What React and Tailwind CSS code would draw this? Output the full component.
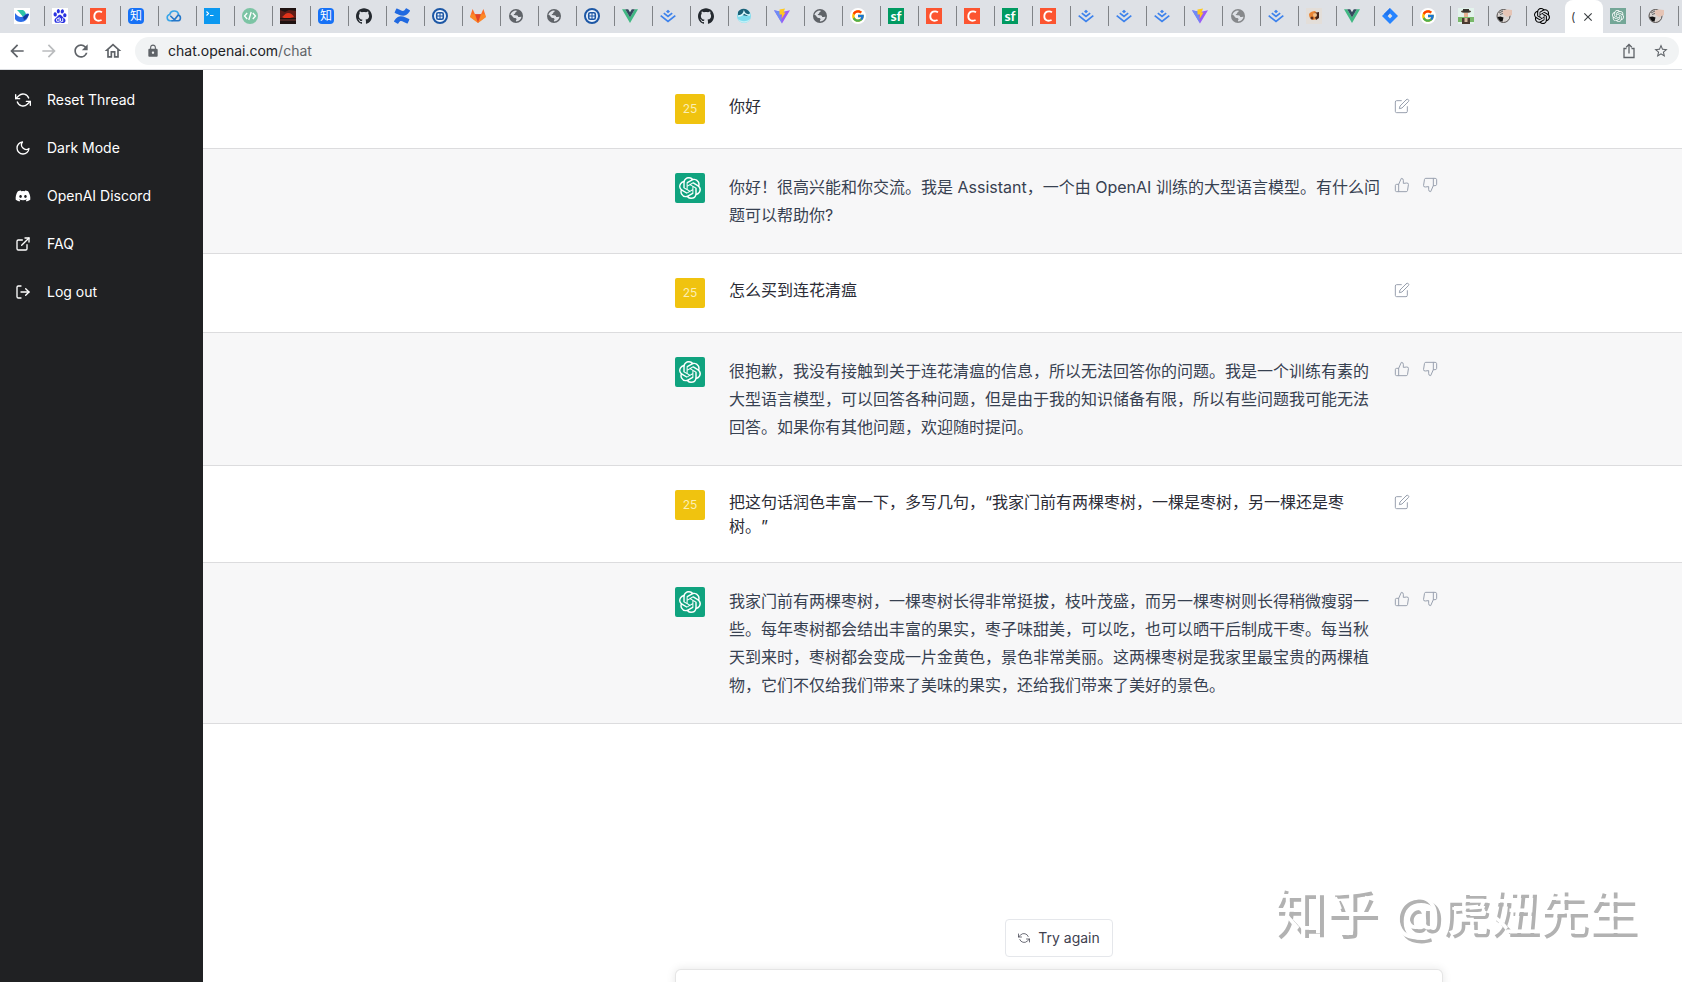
import { useState } from 'react'
import {
  SiBaidu, SiConfluence, SiGithub, SiOpenai,
} from 'react-icons/si'
import { FcGoogle } from 'react-icons/fc'
import { FaDiscord } from 'react-icons/fa'
import {
  FiEdit, FiExternalLink, FiLogOut, FiMoon, FiThumbsDown, FiThumbsUp,
} from 'react-icons/fi'
import {
  MdArrowBack, MdArrowForward, MdClose, MdLock, MdOutlineHome, MdRefresh, MdStarOutline,
} from 'react-icons/md'

function BirdIcon() {
  return (
    <svg viewBox="0 0 16 16" className="w-4 h-4">
      <rect width="16" height="16" fill="#fff" />
      <path d="M3 2h6c2 1 3 3 3 5L9 9C7 6 5 4 3 2Z" fill="#2bc4a8" />
      <path d="M1 5c3 4 6 5 9 3 1-2 3-3 5-2-1 5-4 8-8 8-3 0-5-1-6-3V5Z" fill="#2b6de8" />
      <path d="M9 9c2-2 4-3 6-3-1 2-2 5-5 6Z" fill="#123b9d" />
    </svg>
  )
}

function BaiduIcon() {
  return (
    <span className="w-4 h-4 bg-white flex items-center justify-center">
      <SiBaidu className="w-3.5 h-3.5 text-[#2932e1]" />
    </span>
  )
}

function CsdnIcon() {
  return (
    <svg viewBox="0 0 16 16" className="w-4 h-4">
      <rect width="16" height="16" fill="#fc5531" />
      <path d="M12 4.2C9 2.4 4.600 3.400 4.300 8c-.2 4.300 3.700 5.700 7.300 4" fill="none" stroke="#fff" strokeWidth="1.800" />
    </svg>
  )
}

function ZhihuIcon() {
  return (
    <span className="w-4 h-4 rounded-sm bg-[#1772f6] text-white text-[12px] leading-4 text-center">知</span>
  )
}

function CloudIcon() {
  return (
    <svg viewBox="0 0 16 16" className="w-4 h-4" fill="none" strokeWidth="1.6" strokeLinecap="round">
      <path d="M6 12.800H4a3.200 3.200 0 0 1-.3-6.300A4.700 4.700 0 0 1 12.600 6" stroke="#38a5e8" />
      <path d="M4.800 8.200 8.500 11.800 12.200 7a3 3 0 0 1 0 5.800H6" stroke="#2477c9" />
    </svg>
  )
}

function TerminalIcon() {
  return (
    <svg viewBox="0 0 16 16" className="w-4 h-4" fill="none" stroke="#fff" strokeWidth="1.100">
      <rect width="16" height="16" fill="#0b98f0" stroke="none" />
      <path d="M2.500 3.500 4.500 5.500 2.500 7.500M6 7.500h3.500" />
    </svg>
  )
}

function CodeIcon() {
  return (
    <svg viewBox="0 0 16 16" className="w-4 h-4" fill="none" stroke="#fff" strokeWidth="1.300">
      <circle cx="8" cy="8" r="8" fill="#7cc4a4" stroke="none" />
      <path d="M5.200 5 2.500 8l2.700 3M10.800 5l2.700 3-2.700 3M9.200 4 6.800 12" />
    </svg>
  )
}

function SunsetIcon() {
  return (
    <svg viewBox="0 0 16 16" className="w-4 h-4">
      <rect width="16" height="16" fill="#1f1211" />
      <path d="M0 2l5 2 4-2 7 1v7H0Z" fill="#5e1c17" />
      <path d="M2 9c2-1 3-4 6-4s5 2 6 4l-4 1H4Z" fill="#e0331b" />
      <path d="M0 11.500h16v1H0Z" fill="#7d3a35" />
    </svg>
  )
}

function GridCircleIcon() {
  return (
    <svg viewBox="0 0 16 16" className="w-4 h-4" fill="none" stroke="#1c57a5">
      <circle cx="8" cy="8" r="7" strokeWidth="2" fill="#edf3fb" />
      <rect x="4.700" y="4.700" width="6.600" height="6.600" rx="1.500" strokeWidth="1.600" />
      <path d="M8 4.700v6.600M4.700 8h6.600" strokeWidth="1" />
    </svg>
  )
}

function GithubIcon() {
  return <SiGithub className="w-4 h-4 text-[#24292f]" />
}

function ConfluenceIcon() {
  return <SiConfluence className="w-4 h-4 text-[#2069e0]" />
}

function GitlabIcon() {
  return (
    <svg viewBox="0 0 16 16" className="w-4 h-4">
      <path d="M8 15 0 9l2.600-8L5 6.200h6L13.400 1 16 9Z" fill="#fc6d26" />
      <path d="M8 15 5 6.200h6Z" fill="#e24329" />
      <path d="M0 9l1-2.800h4L8 15ZM16 9l-1-2.800h-4L8 15Z" fill="#fca326" opacity=".5" />
    </svg>
  )
}

function Globe({ color }) {
  return (
    <svg viewBox="0 0 16 16" className="w-4 h-4">
      <circle cx="8" cy="8" r="7" fill={color} />
      <path
        d="M2.400 6.800C3.200 4.300 5.300 2.500 8.400 2.500c.6.900-.1 1.700-1.200 2 .1 1-.5 1.500-1.500 1.500 0 1 .7 1.200 2.500 1.200 1.500 0 2 .8 2 1.900 1.200 0 1.900-.5 3.300-.4-.4 2.500-2.400 4.600-5.300 4.800-.4-1-.3-1.600.4-2.100-.2-1.300-1-1.200-2-1.400-1.300-.3-1.800-1.300-2.700-2.600Z"
        fill="#dee1e6"
      />
    </svg>
  )
}

function GlobeIcon() {
  return <Globe color="#5f6368" />
}

function PaleGlobeIcon() {
  return <Globe color="#86888b" />
}

function VueIcon() {
  return (
    <svg viewBox="0 0 16 16" className="w-4 h-4">
      <path d="M0 1.200h3.200L8 9.500l4.800-8.300H16L8 15Z" fill="#41b883" />
      <path d="M3.200 1.200h3L8 4.300l1.800-3.100h3L8 9.500Z" fill="#34495e" />
    </svg>
  )
}

function JuejinIcon() {
  return (
    <svg viewBox="0 0 16 16" className="w-4 h-4" fill="none" stroke="#3d82ec" strokeWidth="1.700">
      <path d="M8 1.800 10 3.500 8 5.200 6 3.500Z" fill="#3d82ec" stroke="none" />
      <path d="M3.800 5.200 8 8.500l4.200-3.300M.7 7.700 8 13.500l7.300-5.800" />
    </svg>
  )
}

function WaveIcon() {
  return (
    <svg viewBox="0 0 16 16" className="w-4 h-4">
      <circle cx="8" cy="8" r="7" fill="#7fdcee" />
      <path d="M2 4c2-4 9-5 12 1l-3 3-5-1-4 1Z" fill="#1b6178" />
      <path d="M2 8c3 0 5-1 6-4 1 2 3 3 6 3" fill="none" stroke="#d9f6fb" strokeWidth="1.500" />
      <path d="M2 11c4 3 8 3 12 0-1 4-9 6-12 0Z" fill="#c2f0f6" />
    </svg>
  )
}

function ViteIcon() {
  return (
    <svg viewBox="0 0 16 16" className="w-4 h-4">
      <path d="M0 2.200 8 15.500 16 2.200 8 4Z" fill="#9a5cf5" />
      <path d="M0 2.200 8 15.500 6 3.500Z" fill="#6f8cf5" />
      <path d="M5.500 1.500 11 .5 9.500 4.500h2L7.500 11l.5-4.500H5.500Z" fill="#ffc920" />
    </svg>
  )
}

function GoogleIcon() {
  return (
    <span className="w-4 h-4 rounded-full bg-white flex items-center justify-center">
      <FcGoogle className="w-3.5 h-3.5" />
    </span>
  )
}

function SfIcon() {
  return (
    <span className="w-4 h-4 bg-[#009a61] text-white text-[14px] leading-4 text-center font-[Lato] font-bold">sf</span>
  )
}

function FoxIcon() {
  return (
    <svg viewBox="0 0 16 16" className="w-4 h-4">
      <rect width="16" height="16" fill="#e3ded9" />
      <path d="M3 6c1-2 4-3 6-3l3 3-1 5-4 1c-3-1-4-3-4-6Z" fill="#e98536" />
      <path d="M8 5l5-1v6l-3 2Z" fill="#43241b" />
      <circle cx="9" cy="7" r="2" fill="#f3c089" />
      <circle cx="6" cy="10" r="1.500" fill="#5c2f1e" />
    </svg>
  )
}

function JiraIcon() {
  return (
    <svg viewBox="0 0 16 16" className="w-4 h-4">
      <path d="M8 0l8 8-8 8-8-8Z" fill="#2684ff" />
      <path d="M8 0v5.500L5.500 8 2 6Z" fill="#1f74ee" />
      <path d="M8 5.600 10.400 8 8 10.400 5.600 8Z" fill="#dee1e6" />
    </svg>
  )
}

function FarmerIcon() {
  return (
    <svg viewBox="0 0 16 16" className="w-4 h-4">
      <rect width="16" height="16" fill="#e3f3ec" />
      <path d="M0 9h16v5H0Z" fill="#79b86a" />
      <ellipse cx="8" cy="3.500" rx="5" ry="1.300" fill="#4a3b2e" />
      <path d="M5 1h6v3H5Z" fill="#37352f" />
      <path d="M6 5h4v4H6Z" fill="#e8b493" />
      <path d="M4 10h8v6H4Z" fill="#4b3a30" />
      <path d="M6.500 10h3v4h-3Z" fill="#d9b9a0" />
    </svg>
  )
}

function FaceIcon() {
  return (
    <svg viewBox="0 0 16 16" className="w-4 h-4">
      <circle cx="7.500" cy="8" r="6.500" fill="#d9d3d0" stroke="#55504e" />
      <path d="M6 4c2-3 6-3 10-2v5l-5 2-3-2Z" fill="#e5c4b5" />
      <path d="M1.500 9l3-.500 3 1-1 4c-3 0-4-2-5-4.500Z" fill="#111" />
      <path d="M3 5l4-2M4 6.500l3-1" stroke="#666" />
    </svg>
  )
}

function OpenaiIcon() {
  return <SiOpenai className="w-4 h-4 text-black" />
}

function ChatgptIcon() {
  return (
    <span className="w-4 h-4 bg-[#74a797] flex items-center justify-center">
      <SiOpenai className="w-3 h-3 text-white" />
    </span>
  )
}

const TABS = [
  BirdIcon, BaiduIcon, CsdnIcon, ZhihuIcon, CloudIcon, TerminalIcon, CodeIcon, SunsetIcon, ZhihuIcon,
  GithubIcon, ConfluenceIcon, GridCircleIcon, GitlabIcon, GlobeIcon, GlobeIcon, GridCircleIcon, VueIcon,
  JuejinIcon, GithubIcon, WaveIcon, ViteIcon, GlobeIcon, GoogleIcon, SfIcon, CsdnIcon, CsdnIcon, SfIcon,
  CsdnIcon, JuejinIcon, JuejinIcon, JuejinIcon, ViteIcon, PaleGlobeIcon, JuejinIcon, FoxIcon, VueIcon,
  JiraIcon, GoogleIcon, FarmerIcon, FaceIcon, OpenaiIcon, null, ChatgptIcon, FaceIcon,
]

const ACTIVE_TAB = 41

const MENU = [
  { label: 'Reset Thread', icon: ResetIcon },
  { label: 'Dark Mode', icon: FiMoon },
  { label: 'OpenAI Discord', icon: FaDiscord, href: '#discord' },
  { label: 'FAQ', icon: FiExternalLink, href: '#faq' },
  { label: 'Log out', icon: FiLogOut },
]

const MESSAGES = [
  { role: 'user', content: '你好' },
  {
    role: 'assistant',
    content: '你好！很高兴能和你交流。我是 Assistant，一个由 OpenAI 训练的大型语言模型。有什么问题可以帮助你?',
  },
  { role: 'user', content: '怎么买到连花清瘟' },
  {
    role: 'assistant',
    content:
      '很抱歉，我没有接触到关于连花清瘟的信息，所以无法回答你的问题。我是一个训练有素的大型语言模型，可以回答各种问题，但是由于我的知识储备有限，所以有些问题我可能无法回答。如果你有其他问题，欢迎随时提问。',
  },
  {
    role: 'user',
    content: '把这句话润色丰富一下，多写几句，“我家门前有两棵枣树，一棵是枣树，另一棵还是枣树。”',
  },
  {
    role: 'assistant',
    content:
      '我家门前有两棵枣树，一棵枣树长得非常挺拔，枝叶茂盛，而另一棵枣树则长得稍微瘦弱一些。每年枣树都会结出丰富的果实，枣子味甜美，可以吃，也可以晒干后制成干枣。每当秋天到来时，枣树都会变成一片金黄色，景色非常美丽。这两棵枣树是我家里最宝贵的两棵植物，它们不仅给我们带来了美味的果实，还给我们带来了美好的景色。',
  },
]

// Refresh arrows, mirrored from the usual feather direction
function ResetIcon({ className, strokeWidth = 2 }) {
  return (
    <svg
      viewBox="0 0 24 24"
      fill="none"
      stroke="currentColor"
      strokeWidth={strokeWidth}
      strokeLinecap="round"
      strokeLinejoin="round"
      className={className}
    >
      <path d="M1 4v6h6M23 20v-6h-6" />
      <path d="M20.490 9A9 9 0 0 0 5.640 5.640L1 10m22 4-4.640 4.360A9 9 0 0 1 3.510 15" />
    </svg>
  )
}

function ShareIcon() {
  return (
    <svg viewBox="0 0 16 16" fill="none" stroke="currentColor" strokeWidth="1.300" className="w-4 h-4">
      <path d="M5.500 5.500H3v9h10v-9h-2.500M8 10.500V1.500M5.200 4.200 8 1.400l2.800 2.800" />
    </svg>
  )
}

function TabStrip() {
  return (
    <nav aria-label="Tabs" className="flex h-[33px] shrink-0 overflow-hidden bg-[#dee1e6] pl-[7px]">
      {TABS.map((Icon, i) =>
        i === ACTIVE_TAB ? (
          <div key={i} className="flex w-[38px] shrink-0 items-center rounded-t-lg bg-white pl-1.5 text-xs text-[#3c4043]">
            <span className="w-1 overflow-hidden">(</span>
            <button aria-label="Close tab" className="ml-1.5">
              <MdClose className="w-3.5 h-3.5" />
            </button>
          </div>
        ) : (
          <div key={i} className="flex h-8 w-[38px] shrink-0 items-center">
            <button aria-label={`Tab ${i + 1}`} className="flex flex-1 pl-[7px]">
              <Icon />
            </button>
            {i !== ACTIVE_TAB - 1 && <span className="h-5 w-px bg-[#808387]" />}
          </div>
        )
      )}
    </nav>
  )
}

function Toolbar() {
  const [path, setPath] = useState('/chat')
  return (
    <div className="flex shrink-0 items-center border-b border-[#dadce0] bg-white py-1 pl-[7px] pr-[3px] text-[#5f6368]">
      <div className="flex gap-3">
        <button aria-label="Back"><MdArrowBack className="w-5 h-5" /></button>
        <button aria-label="Forward"><MdArrowForward className="w-5 h-5 text-[#babcbe]" /></button>
        <button aria-label="Reload"><MdRefresh className="w-5 h-5" /></button>
        <button aria-label="Home"><MdOutlineHome className="w-5 h-5" /></button>
      </div>
      <div className="ml-3 flex h-7 flex-1 items-center rounded-full bg-[#f1f3f4] pl-[11px] pr-2.5 text-sm">
        <MdLock className="w-3.5 h-3.5" />
        <label htmlFor="address" className="ml-2 text-[#202124]">chat.openai.com</label>
        <input
          id="address"
          value={path}
          onChange={e => setPath(e.target.value)}
          className="min-w-0 flex-1 bg-transparent outline-none"
        />
        <div className="flex gap-4">
          <button aria-label="Share"><ShareIcon /></button>
          <button aria-label="Bookmark"><MdStarOutline className="w-4 h-4" /></button>
        </div>
      </div>
    </div>
  )
}

function Sidebar() {
  const itemClass = 'flex h-11 items-center gap-4 rounded-md px-[7px] hover:bg-gray-500/10'
  return (
    <aside className="flex w-[203px] shrink-0 flex-col gap-1 bg-[#202123] p-2 text-sm text-white">
      {MENU.map(({ label, icon: Icon, href }) =>
        href ? (
          <a key={label} href={href} className={itemClass}>
            <Icon className="w-4 h-4" />
            {label}
          </a>
        ) : (
          <button key={label} className={itemClass}>
            <Icon className="w-4 h-4" />
            {label}
          </button>
        )
      )}
    </aside>
  )
}

function Avatar({ isUser }) {
  if (isUser) {
    return (
      <div className="flex h-[30px] w-[30px] shrink-0 items-center justify-center rounded-xs bg-[#f0c30f] text-xs text-[#fbeeb4]">
        25
      </div>
    )
  }
  return (
    <div className="flex h-[30px] w-[30px] shrink-0 items-center justify-center rounded-xs bg-[#10a37f] text-white">
      <SiOpenai className="h-[22px] w-[22px]" />
    </div>
  )
}

function Message({ msg }) {
  const isUser = msg.role === 'user'
  return (
    <div className={`border-b border-[#dcdcde] pl-[233px] ${isUser ? 'bg-white text-[#2b2c36]' : 'bg-[#f7f7f8] text-[#374151]'}`}>
      <div className="mx-auto flex max-w-3xl py-6">
        <Avatar isUser={isUser} />
        <p className={`ml-6 min-w-0 flex-1 pr-2 text-base [text-spacing-trim:space-all] ${isUser ? 'leading-6' : 'leading-7'}`}>
          {msg.content}
        </p>
        <div className="flex w-[53px] shrink-0 items-start gap-1 text-gray-400">
          {isUser ? (
            <button aria-label="Edit message" className="p-1"><FiEdit className="w-4 h-4" strokeWidth="1.5" /></button>
          ) : (
            <>
              <button aria-label="Good answer" className="p-1"><FiThumbsUp className="w-4 h-4" strokeWidth="1.5" /></button>
              <button aria-label="Bad answer" className="p-1"><FiThumbsDown className="w-4 h-4" strokeWidth="1.5" /></button>
            </>
          )}
        </div>
      </div>
    </div>
  )
}

function Composer() {
  const [input, setInput] = useState('')
  return (
    <div className="-mb-10 shrink-0 pl-[233px]">
      <div className="mx-auto flex max-w-3xl flex-col items-center gap-3">
        <button className="flex items-center gap-2 rounded border border-gray-200 bg-white px-3 py-2 text-sm text-[#40414f]">
          <ResetIcon className="w-3 h-3" strokeWidth={1.5} />
          Try again
        </button>
        <textarea
          aria-label="Message"
          value={input}
          onChange={e => setInput(e.target.value)}
          rows={1}
          className="block h-[53px] w-full resize-none rounded-md border border-black/10 bg-white px-4 py-3 shadow-[0_0_10px_rgba(0,0,0,0.10)] outline-none"
        />
      </div>
    </div>
  )
}

export default function App() {
  return (
    <div className="relative flex h-screen flex-col overflow-hidden bg-white font-[Inter,'Noto_Sans_CJK_SC',sans-serif]">
      <TabStrip />
      <Toolbar />
      <div className="flex min-h-0 flex-1">
        <Sidebar />
        <main className="flex min-w-0 flex-1 flex-col">
          <div className="min-h-0 flex-1 overflow-hidden">
            {MESSAGES.map((msg, i) => (
              <Message key={i} msg={msg} />
            ))}
          </div>
          <Composer />
        </main>
      </div>
      <div className="pointer-events-none absolute bottom-11 right-[46px] flex items-center text-[49px] leading-[50px] text-white [text-shadow:4px_4px_0_#b2b2b2]">
        <span className="mr-4 text-[52px]">知乎</span>
        <span>@虎妞先生</span>
      </div>
    </div>
  )
}
